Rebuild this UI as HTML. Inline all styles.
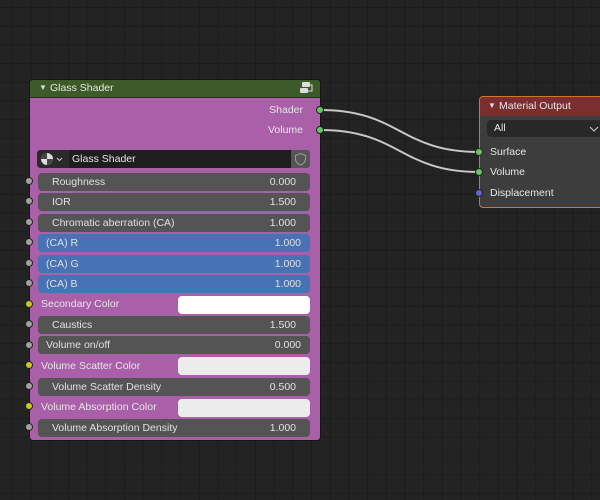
<!DOCTYPE html>
<html><head><style>
*{margin:0;padding:0;box-sizing:border-box}
body{width:600px;height:500px;overflow:hidden;background-color:#232323;
background-image:
linear-gradient(to right,#1c1c1c 1px,transparent 1px),
linear-gradient(to bottom,#1c1c1c 1px,transparent 1px);
background-size:18.7px 18.7px;background-position:12px 7px;
font-family:"Liberation Sans",sans-serif;font-size:10.5px;color:#e6e6e6;position:relative}
.a{position:absolute;line-height:14px}
.node{position:absolute;left:29px;top:79px;width:292px;height:362px;background:#aa5fa9;border:1px solid #151515;border-radius:4px;overflow:hidden}
.hdr{position:absolute;left:0;top:0;right:0;height:18px;background:#3d5a29;border-bottom:1px solid #2a2a2a}
.f{position:absolute;left:38px;width:272px;height:18px;border-radius:4px;background:#545454;line-height:18px;color:#e0e0e0}
.f .l{position:absolute;left:14px}
.f .v{position:absolute;right:14px}
.b{background:#4772b3}
.b .l,.o .l{left:8px}
.b .v,.o .v{right:9px}
.s{position:absolute;width:8px;height:8px;border-radius:50%;background:#a1a1a1;border:1px solid #222}
.y{background:#c7c729}
.g{background:#63c763}
.p{background:#6363c7}
.lab{position:absolute;left:41px;line-height:18px}
.sw{position:absolute;left:178px;width:132px;height:18px;border-radius:4px;background:#ececec}
</style></head><body>
<svg class="a" style="left:0;top:0" width="600" height="500">
<path d="M320 110 C400 110 400 152 479 152" stroke="#c8c8c8" stroke-width="2" fill="none"/>
<path d="M320 130 C400 130 400 172 479 172" stroke="#c8c8c8" stroke-width="2" fill="none"/>
</svg>
<div class="node"><div class="hdr"></div></div>
<div class="a" style="left:39px;top:81px;font-size:8px;color:#ddd">▼</div>
<div class="a" style="left:50px;top:80px;line-height:16px">Glass Shader</div>
<svg class="a" style="left:298px;top:80px" width="16" height="16"><rect x="4" y="2" width="8" height="5" rx="1" fill="#ddd"/><rect x="2" y="8" width="8" height="5" rx="1" fill="#ddd"/><path d="M12 5 h2 v6 h-4" stroke="#ddd" fill="none"/></svg>
<div class="a" style="left:203px;top:103px;width:100px;text-align:right">Shader</div>
<div class="a" style="left:203px;top:123px;width:100px;text-align:right">Volume</div>
<div class="s g" style="left:316px;top:106px"></div>
<div class="s g" style="left:316px;top:126px"></div>
<div class="a" style="left:37px;top:150px;width:273px;height:18px;border-radius:4px;background:#1e1e1e"></div>
<div class="a" style="left:37px;top:150px;width:32px;height:18px;border-radius:4px 0 0 4px;background:#2a2a2a"></div>
<svg class="a" style="left:40px;top:152px" width="28" height="14"><circle cx="7" cy="7" r="6" fill="#ddd"/><path d="M7 1 A6 6 0 0 0 1 7 L7 7Z" fill="#444"/><path d="M7 7 L13 7 A6 6 0 0 1 7 13Z" fill="#444"/><path d="M17 6 l2.5 2.5 l2.5-2.5" stroke="#ccc" fill="none"/></svg>
<div class="a" style="left:72px;top:150px;line-height:18px">Glass Shader</div>
<div class="a" style="left:291px;top:150px;width:19px;height:18px;border-radius:0 4px 4px 0;background:#555"></div>
<svg class="a" style="left:294px;top:152px" width="13" height="14"><path d="M6.5 1.5 L11.5 3.5 V7 C11.5 10 9 12 6.5 13 C4 12 1.5 10 1.5 7 V3.5Z" stroke="#999" fill="none"/></svg>

<div class="f" style="top:173px"><span class="l">Roughness</span><span class="v">0.000</span></div>
<div class="f" style="top:193px"><span class="l">IOR</span><span class="v">1.500</span></div>
<div class="f" style="top:214px"><span class="l">Chromatic aberration (CA)</span><span class="v">1.000</span></div>
<div class="f b" style="top:234px"><span class="l">(CA) R</span><span class="v">1.000</span></div>
<div class="f b" style="top:255px"><span class="l">(CA) G</span><span class="v">1.000</span></div>
<div class="f b" style="top:275px"><span class="l">(CA) B</span><span class="v">1.000</span></div>
<div class="lab" style="top:295px">Secondary Color</div><div class="sw" style="top:296px;background:#fff"></div>
<div class="f" style="top:316px"><span class="l">Caustics</span><span class="v">1.500</span></div>
<div class="f o" style="top:336px"><span class="l">Volume on/off</span><span class="v">0.000</span></div>
<div class="lab" style="top:357px">Volume Scatter Color</div><div class="sw" style="top:357px"></div>
<div class="f" style="top:378px"><span class="l">Volume Scatter Density</span><span class="v">0.500</span></div>
<div class="lab" style="top:398px">Volume Absorption Color</div><div class="sw" style="top:399px"></div>
<div class="f" style="top:419px"><span class="l">Volume Absorption Density</span><span class="v">1.000</span></div>

<div class="s" style="left:25px;top:177px"></div>
<div class="s" style="left:25px;top:197px"></div>
<div class="s" style="left:25px;top:218px"></div>
<div class="s" style="left:25px;top:238px"></div>
<div class="s" style="left:25px;top:259px"></div>
<div class="s" style="left:25px;top:279px"></div>
<div class="s y" style="left:25px;top:300px"></div>
<div class="s" style="left:25px;top:320px"></div>
<div class="s" style="left:25px;top:341px"></div>
<div class="s y" style="left:25px;top:361px"></div>
<div class="s" style="left:25px;top:382px"></div>
<div class="s y" style="left:25px;top:402px"></div>
<div class="s" style="left:25px;top:423px"></div>

<div class="a" style="left:479px;top:96px;width:130px;height:112px;background:#3d3d3d;border:1px solid #d4742a;border-radius:4px;overflow:hidden">
<div style="height:19px;background:#7b2e2e"></div></div>
<div class="a" style="left:488px;top:99px;font-size:8px;color:#ddd">▼</div>
<div class="a" style="left:499px;top:98px;line-height:16px">Material Output</div>
<div class="a" style="left:487px;top:120px;width:120px;height:17px;border-radius:4px;background:#282828"></div>
<div class="a" style="left:494px;top:120px;line-height:17px">All</div>
<svg class="a" style="left:589px;top:125px" width="10" height="8"><path d="M1 2 l4 4 l4-4" stroke="#ccc" fill="none"/></svg>
<div class="a" style="left:490px;top:145px">Surface</div>
<div class="a" style="left:490px;top:165px">Volume</div>
<div class="a" style="left:490px;top:186px">Displacement</div>
<div class="s g" style="left:475px;top:148px"></div>
<div class="s g" style="left:475px;top:168px"></div>
<div class="s p" style="left:475px;top:189px"></div>
</body></html>
